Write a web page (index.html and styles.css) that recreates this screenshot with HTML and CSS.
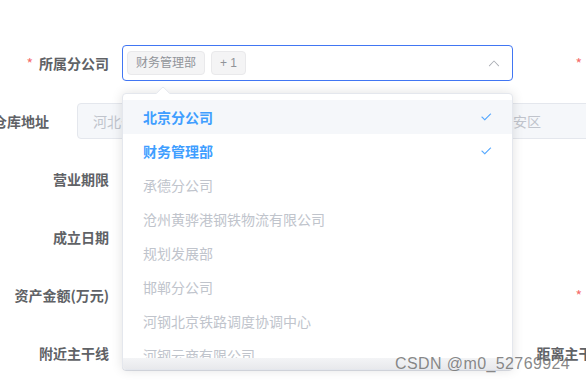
FILE: index.html
```html
<!DOCTYPE html>
<html lang="zh-CN">
<head>
<meta charset="utf-8">
<title>表单</title>
<link rel="stylesheet" href="styles.css">
</head>
<body>
<div class="page">
  <div class="form">
    <div class="row">
      <div class="item">
        <label class="label"><span class="star">*</span>所属分公司</label>
        <div class="select">
          <div class="tags"><span class="tag">财务管理部</span><span class="tag">+ 1</span></div>
          <svg class="caret" viewBox="0 0 1024 1024" width="14" height="14"><path fill="#a8abb2" d="M488.832 344.32l-339.84 356.672a32 32 0 0 0 0 44.16l.384.384a29.44 29.44 0 0 0 42.688 0l320-335.872 319.872 335.872a29.44 29.44 0 0 0 42.688 0l.384-.384a32 32 0 0 0 0-44.16L535.168 344.32a32 32 0 0 0-46.336 0z"/></svg>
        </div>
      </div>
      <div class="item right"><label class="label rlabel req"><span class="star">*</span>仓库类型</label></div>
    </div>
    <div class="row">
      <div class="item wide">
        <label class="label short">仓库地址</label>
        <div class="input disabled">河北省石家庄市桥西区中山西路一百零八号河钢集团物流仓储中心长安区</div>
      </div>
    </div>
    <div class="row">
      <div class="item">
        <label class="label">营业期限</label>
        <div class="input plain"></div>
      </div>
      <div class="item right"><label class="label rlabel req"><span class="star">*</span>负责人</label></div>
    </div>
    <div class="row">
      <div class="item">
        <label class="label">成立日期</label>
        <div class="input plain"></div>
      </div>
    </div>
    <div class="row">
      <div class="item">
        <label class="label">资产金额(万元)</label>
        <div class="input plain"></div>
      </div>
      <div class="item right"><label class="label rlabel req"><span class="star">*</span>占地面积</label></div>
    </div>
    <div class="row">
      <div class="item">
        <label class="label">附近主干线</label>
        <div class="input plain"></div>
      </div>
      <div class="item right"><label class="label rlabel">距离主干线(km)</label></div>
    </div>
  </div>

  <div class="popper">
    <span class="popper-arrow"></span>
    <ul class="options">
      <li class="option selected hover"><span>北京分公司</span><svg class="check" viewBox="0 0 1024 1024" width="12" height="12"><path fill="#409eff" stroke="#409eff" stroke-width="30" d="M406.656 706.944 195.84 496.256a32 32 0 1 0-45.248 45.248l256 256 512-512a32 32 0 0 0-45.248-45.248L406.592 706.944z"/></svg></li>
      <li class="option selected"><span>财务管理部</span><svg class="check" viewBox="0 0 1024 1024" width="12" height="12"><path fill="#409eff" stroke="#409eff" stroke-width="30" d="M406.656 706.944 195.84 496.256a32 32 0 1 0-45.248 45.248l256 256 512-512a32 32 0 0 0-45.248-45.248L406.592 706.944z"/></svg></li>
      <li class="option disabled"><span>承德分公司</span></li>
      <li class="option disabled"><span>沧州黄骅港钢铁物流有限公司</span></li>
      <li class="option disabled"><span>规划发展部</span></li>
      <li class="option disabled"><span>邯郸分公司</span></li>
      <li class="option disabled"><span>河钢北京铁路调度协调中心</span></li>
      <li class="option disabled"><span>河钢云商有限公司</span></li>
    </ul>
    <div class="popper-foot"></div>
  </div>

  <div class="watermark">CSDN @m0_52769924</div>
</div>
</body>
</html>
```

FILE: styles.css
```css
html, body {
  margin: 0;
  padding: 0;
  background: #ffffff;
}

.page {
  position: relative;
  width: 586px;
  height: 382px;
  overflow: hidden;
  font-family: "Noto Sans CJK SC", "Noto Sans", sans-serif;
  font-size: 14px;
  color: #606266;
}

.form {
  padding-top: 45px;
}

.row {
  display: flex;
  height: 36px;
  margin-bottom: 22px;
}

.item {
  display: flex;
  align-items: center;
  flex: none;
  width: 513px;
}

.item.wide {
  width: 660px;
}

.item.right {
  width: 200px;
  margin-left: 13px;
}

.label {
  flex: none;
  box-sizing: border-box;
  width: 122px;
  padding-right: 13px;
  display: flex;
  justify-content: flex-end;
  align-items: center;
  white-space: nowrap;
  font-weight: 700;
  color: #606266;
  line-height: 36px;
}

.label.short {
  width: 49px;
  padding-right: 0;
}

.label.rlabel {
  width: 125px;
  padding-right: 12px;
}

.label.rlabel.req {
  width: 130px;
}

.star {
  color: #f56c6c;
  font-weight: 400;
  margin-right: 6px;
}

.select {
  box-sizing: border-box;
  width: 391px;
  height: 36px;
  border: 1px solid #4176f3;
  border-radius: 4px;
  display: flex;
  align-items: center;
  justify-content: space-between;
  padding: 0 11px 0 4px;
  background: #fff;
}

.tags {
  display: flex;
  gap: 6px;
}

.tag {
  box-sizing: border-box;
  height: 24px;
  line-height: 22px;
  padding: 0 8px;
  font-family: "Liberation Sans", "Noto Sans CJK SC", sans-serif;
  font-size: 12px;
  color: #909399;
  background: #f4f4f5;
  border: 1px solid #e9e9eb;
  border-radius: 4px;
}

.caret {
  display: block;
}

.input {
  box-sizing: border-box;
  height: 36px;
  line-height: 34px;
  border: 1px solid #dcdfe6;
  border-radius: 4px;
  padding: 0 15px;
  white-space: nowrap;
  overflow: hidden;
}

.input.disabled {
  margin-left: 28px;
  width: 560px;
  flex: none;
  background: #f5f7fa;
  border-color: #e4e7ed;
  color: #c0c4cc;
}

.input.plain {
  width: 391px;
  flex: none;
  background: #fff;
}

/* dropdown overlay */
.popper {
  position: absolute;
  left: 122px;
  top: 93px;
  width: 391px;
  box-sizing: border-box;
  background: #fff;
  border: 1px solid #e4e7ed;
  border-radius: 4px;
  box-shadow: 0 0 12px rgba(0, 0, 0, 0.12);
  z-index: 10;
}

.popper-arrow {
  position: absolute;
  left: 35px;
  top: -6px;
  width: 10px;
  height: 10px;
  background: #fff;
  border-top: 1px solid #e4e7ed;
  border-left: 1px solid #e4e7ed;
  border-top-left-radius: 2px;
  transform: rotate(45deg);
  box-sizing: border-box;
}

.options {
  list-style: none;
  margin: 0;
  padding: 6px 0;
  height: 264px;
  box-sizing: border-box;
  overflow: hidden;
}

.option {
  height: 34px;
  line-height: 34px;
  padding: 0 20px;
  display: flex;
  align-items: center;
  justify-content: space-between;
  white-space: nowrap;
  color: #606266;
}

.option.hover {
  background: #f5f7fa;
}

.option.selected {
  color: #409eff;
  font-weight: 700;
}

.option.disabled {
  color: #c0c4cc;
}

.check {
  display: block;
}

.popper-foot {
  height: 11px;
  background: linear-gradient(#f3f4f6, #e8e9ec);
  border-bottom-left-radius: 3px;
  border-bottom-right-radius: 3px;
}

.watermark {
  position: absolute;
  left: 395px;
  top: 356px;
  font-family: "Liberation Sans", Arial, sans-serif;
  font-size: 16px;
  line-height: 16px;
  letter-spacing: 0.4px;
  color: rgba(115, 115, 115, 0.85);
  white-space: nowrap;
  z-index: 20;
}
```
